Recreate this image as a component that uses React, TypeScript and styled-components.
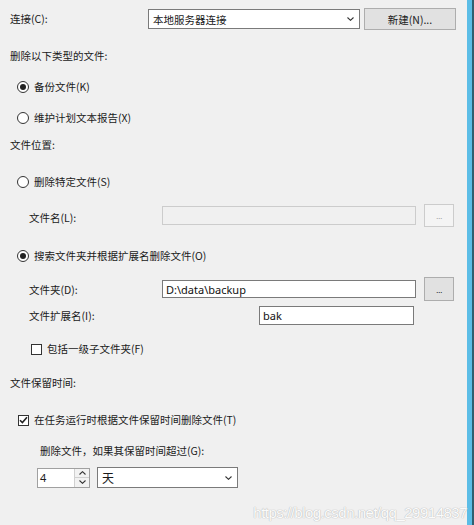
import React from 'react';
import styled, { createGlobalStyle } from 'styled-components';

const GlobalStyle = createGlobalStyle`
  html, body {
    margin: 0;
    padding: 0;
    background: #f0f0f0;
  }
  body {
    font-family: "Noto Sans CJK SC", "Noto Sans", sans-serif;
    font-size: 10.5px;
    color: #1a1a1a;
  }
`;

const Window = styled.div`
  position: relative;
  display: flex;
  width: 474px;
  height: 525px;
  overflow: hidden;
`;

const Panel = styled.div`
  flex: 1;
  display: flex;
  flex-direction: column;
  padding: 8px 0 0 10px;
  background: #f0f0f0;
`;

const SideBar = styled.div`
  width: 7px;
  background: linear-gradient(to right, #5cbde6 0, #5cbde6 5px, #2f6070 5px, #2f6070 7px);
`;

interface SpacedProps {
  $mt?: number;
  $indent?: number;
}

const Line = styled.div<SpacedProps>`
  margin-top: ${p => p.$mt ?? 0}px;
  padding-left: ${p => p.$indent ?? 0}px;
  height: 16px;
  line-height: 16px;
  white-space: nowrap;
`;

const FieldRow = styled.div<SpacedProps & { $cols: string; $height: number; $gap?: number }>`
  margin-top: ${p => p.$mt ?? 0}px;
  padding-left: ${p => p.$indent ?? 0}px;
  display: grid;
  grid-template-columns: ${p => p.$cols};
  column-gap: ${p => p.$gap ?? 0}px;
  align-items: center;
  height: ${p => p.$height}px;
`;

const FieldLabel = styled.span<{ $shift?: number }>`
  white-space: nowrap;
  line-height: 16px;
  position: relative;
  top: ${p => p.$shift ?? 0}px;
`;

const Option = styled.label<SpacedProps>`
  margin-top: ${p => p.$mt ?? 0}px;
  padding-left: ${p => p.$indent ?? 0}px;
  display: flex;
  align-items: center;
  gap: 5px;
  height: 16px;
  line-height: 16px;
  white-space: nowrap;
`;

const RadioMark = styled.span<{ $on?: boolean }>`
  box-sizing: border-box;
  width: 12px;
  height: 12px;
  border: 1px solid #333;
  border-radius: 50%;
  background: #fff;
  display: flex;
  align-items: center;
  justify-content: center;
  &::after {
    content: '';
    width: 6px;
    height: 6px;
    border-radius: 50%;
    background: ${p => (p.$on ? '#222' : 'transparent')};
  }
`;

const CheckMark = styled.span`
  box-sizing: border-box;
  width: 11px;
  height: 11px;
  border: 1px solid #333;
  background: #fff;
  display: flex;
  align-items: center;
  justify-content: center;
`;

const ComboBox = styled.div<{ $width: number; $height: number }>`
  box-sizing: border-box;
  width: ${p => p.$width}px;
  height: ${p => p.$height}px;
  border: 1px solid #7a7a7a;
  background: #fff;
  display: flex;
  align-items: center;
  justify-content: space-between;
  padding: 0 5px 0 4px;
  white-space: nowrap;
`;

const ComboText = styled.span<{ $size?: number }>`
  font-size: ${p => p.$size ?? 10.5}px;
`;

const TextBox = styled.div<{ $width: number; $height: number; $disabled?: boolean }>`
  box-sizing: border-box;
  width: ${p => p.$width}px;
  height: ${p => p.$height}px;
  border: 1px solid ${p => (p.$disabled ? '#cccccc' : '#7a7a7a')};
  background: ${p => (p.$disabled ? '#f0f0f0' : '#fff')};
  display: flex;
  align-items: center;
  padding: 0 3px;
  font-family: "Noto Sans", "Noto Sans CJK SC", sans-serif;
  font-size: 11px;
  color: #111;
  white-space: nowrap;
`;

const PushButton = styled.div<{ $width: number; $height: number; $disabled?: boolean }>`
  box-sizing: border-box;
  width: ${p => p.$width}px;
  height: ${p => p.$height}px;
  border: 1px solid ${p => (p.$disabled ? '#cccccc' : '#adadad')};
  background: ${p => (p.$disabled ? '#f4f4f4' : '#e1e1e1')};
  color: ${p => (p.$disabled ? '#a0a0a0' : '#1a1a1a')};
  display: flex;
  align-items: center;
  justify-content: center;
  white-space: nowrap;
`;

const Ellipsis = styled.span`
  font-family: "Liberation Sans", sans-serif;
  font-size: 9px;
  letter-spacing: -0.5px;
  line-height: 1;
  position: relative;
  top: 1px;
`;

const SpinRow = styled.div<SpacedProps>`
  margin-top: ${p => p.$mt ?? 0}px;
  padding-left: ${p => p.$indent ?? 0}px;
  display: flex;
  align-items: center;
  gap: 7px;
  height: 21px;
`;

const Spinner = styled.div`
  box-sizing: border-box;
  width: 53px;
  height: 20px;
  border: 1px solid #a0a0a0;
  background: #fff;
  display: flex;
`;

const SpinValue = styled.span`
  flex: 1;
  padding-left: 2px;
  line-height: 18px;
  font-family: "Noto Sans", sans-serif;
  font-size: 11px;
`;

const SpinButtons = styled.div`
  width: 14px;
  display: flex;
  flex-direction: column;
  border-left: 1px solid #d0d0d0;
`;

const SpinButton = styled.div`
  flex: 1;
  display: flex;
  align-items: center;
  justify-content: center;
  background: #f2f2f2;
  & + & {
    border-top: 1px solid #d0d0d0;
  }
`;

const Watermark = styled.div`
  position: absolute;
  right: 7px;
  bottom: 4px;
  font-family: "Liberation Sans", sans-serif;
  font-size: 15px;
  letter-spacing: -0.5px;
  color: #fbfbfb;
  text-shadow: 0 0 1px #b8b8b8, 0 0 1px #b8b8b8;
  white-space: nowrap;
`;

const Chevron = ({ up = false }: { up?: boolean }) => (
  <svg width="7" height="4" viewBox="0 0 7 4" style={{ transform: up ? 'rotate(180deg)' : undefined }}>
    <path d="M0.5 0.5 L3.5 3.3 L6.5 0.5" fill="none" stroke="#333" strokeWidth="1.1" />
  </svg>
);

const Tick = () => (
  <svg width="9" height="8" viewBox="0 0 9 8">
    <path d="M1 4.2 L3.4 6.6 L8 1.2" fill="none" stroke="#222" strokeWidth="1.6" />
  </svg>
);

const Radio = ({ on, children, ...rest }: SpacedProps & { on?: boolean; children: React.ReactNode }) => (
  <Option {...rest}>
    <RadioMark $on={on} />
    <span>{children}</span>
  </Option>
);

const Check = ({ on, children, ...rest }: SpacedProps & { on?: boolean; children: React.ReactNode }) => (
  <Option {...rest}>
    <CheckMark>{on ? <Tick /> : null}</CheckMark>
    <span>{children}</span>
  </Option>
);

export default function App() {
  return (
    <>
      <GlobalStyle />
      <Window>
        <Panel>
          <FieldRow $cols="134px 212px 92px" $gap={4} $height={22}>
            <FieldLabel>连接(C):</FieldLabel>
            <ComboBox $width={212} $height={20}>
              <ComboText>本地服务器连接</ComboText>
              <Chevron />
            </ComboBox>
            <PushButton $width={92} $height={22}>新建(N)...</PushButton>
          </FieldRow>

          <Line $mt={18}>删除以下类型的文件:</Line>
          <Radio $mt={15} $indent={7} on>备份文件(K)</Radio>
          <Radio $mt={15} $indent={7}>维护计划文本报告(X)</Radio>

          <Line $mt={11}>文件位置:</Line>
          <Radio $mt={21} $indent={7}>删除特定文件(S)</Radio>
          <FieldRow $mt={14} $indent={19} $cols="125px 254px 30px" $gap={8} $height={23}>
            <FieldLabel $shift={2}>文件名(L):</FieldLabel>
            <TextBox $width={254} $height={19} $disabled />
            <PushButton $width={30} $height={23} $disabled>
              <Ellipsis>...</Ellipsis>
            </PushButton>
          </FieldRow>

          <Radio $mt={21} $indent={7} on>搜索文件夹并根据扩展名删除文件(O)</Radio>
          <FieldRow $mt={13} $indent={19} $cols="125px 254px 30px" $gap={8} $height={24}>
            <FieldLabel $shift={1}>文件夹(D):</FieldLabel>
            <TextBox $width={254} $height={18}>D:\data\backup</TextBox>
            <PushButton $width={30} $height={24}>
              <Ellipsis>...</Ellipsis>
            </PushButton>
          </FieldRow>
          <FieldRow $mt={5} $indent={19} $cols="230px 155px" $height={19}>
            <FieldLabel>文件扩展名(I):</FieldLabel>
            <TextBox $width={155} $height={19}>bak</TextBox>
          </FieldRow>
          <Check $mt={16} $indent={21}>包括一级子文件夹(F)</Check>

          <Line $mt={18}>文件保留时间:</Line>
          <Check $mt={21} $indent={8} on>在任务运行时根据文件保留时间删除文件(T)</Check>
          <Line $mt={15} $indent={30}>删除文件，如果其保留时间超过(G):</Line>
          <SpinRow $mt={8} $indent={27}>
            <Spinner>
              <SpinValue>4</SpinValue>
              <SpinButtons>
                <SpinButton>
                  <Chevron up />
                </SpinButton>
                <SpinButton>
                  <Chevron />
                </SpinButton>
              </SpinButtons>
            </Spinner>
            <ComboBox $width={141} $height={21}>
              <ComboText $size={12}>天</ComboText>
              <Chevron />
            </ComboBox>
          </SpinRow>
        </Panel>
        <SideBar />
        <Watermark>https://blog.csdn.net/qq_29914837</Watermark>
      </Window>
    </>
  );
}
